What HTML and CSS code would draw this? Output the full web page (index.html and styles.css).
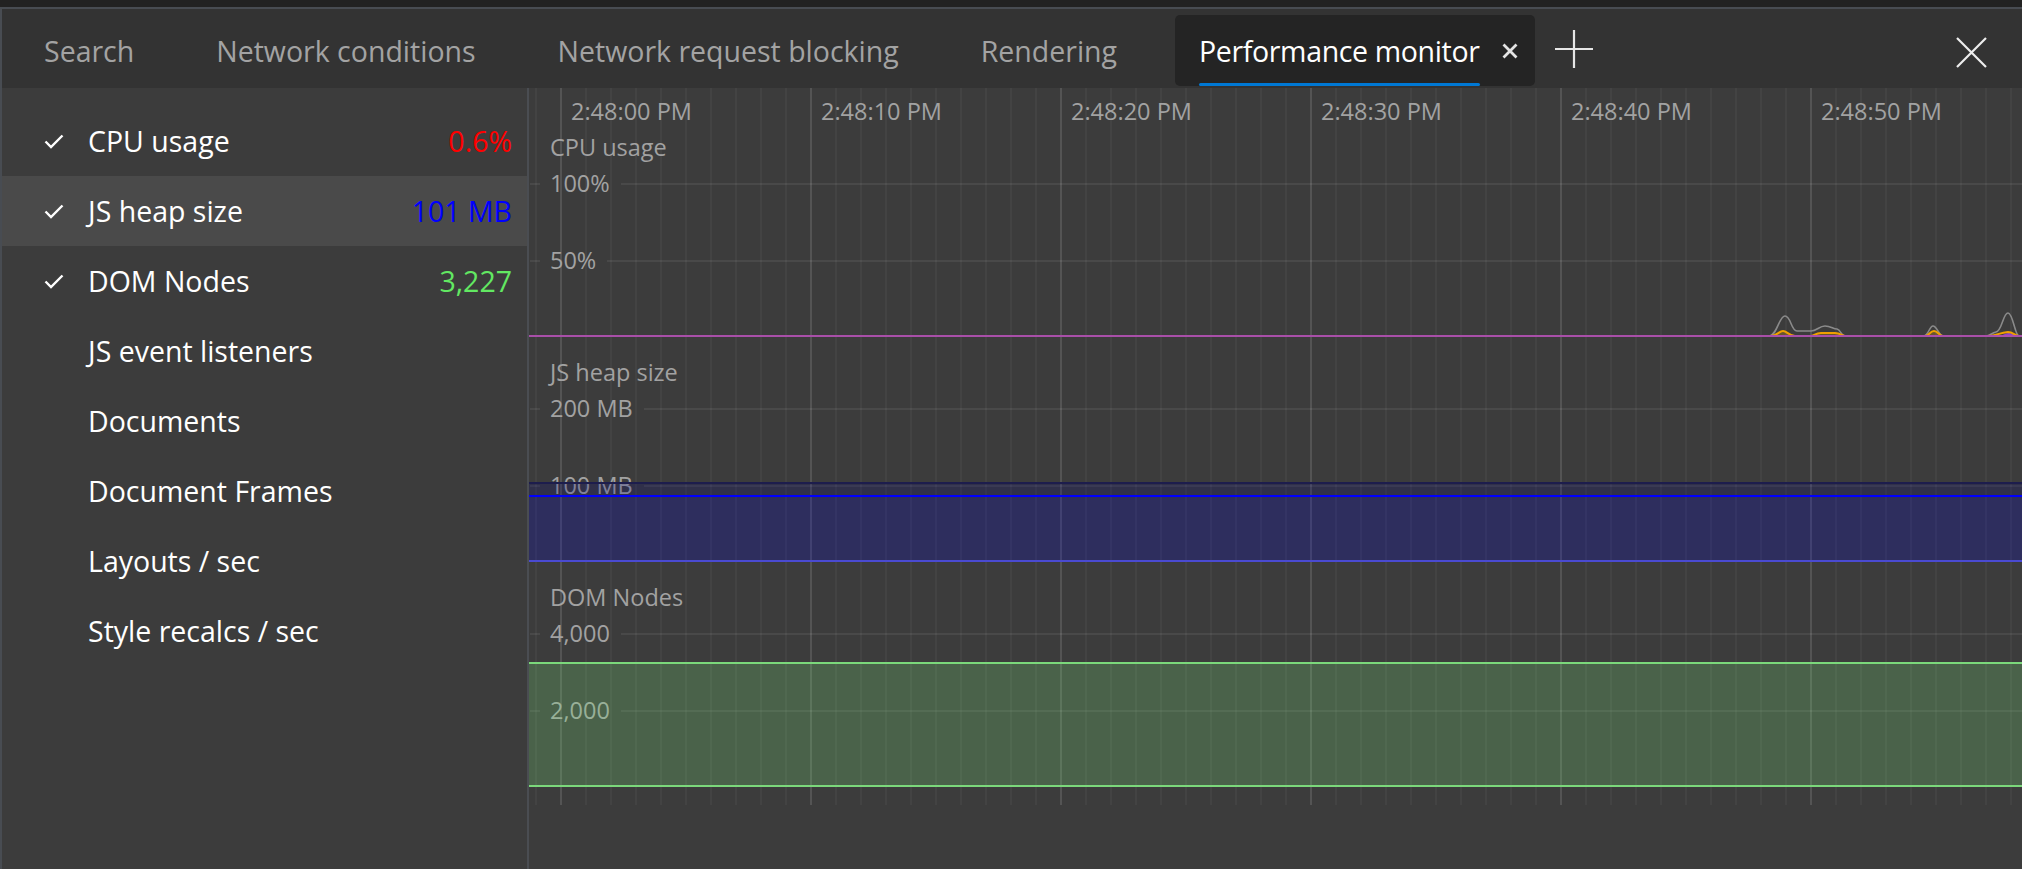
FILE: index.html
```html
<!DOCTYPE html>
<html lang="en">
<head>
<meta charset="utf-8">
<title>Performance monitor</title>
<link rel="stylesheet" href="styles.css">
</head>
<body>
<div class="topstrip"></div>
<div class="frame">
  <div class="tabbar">
    <div class="tab"><span class="tab-label">Search</span></div>
    <div class="tab"><span class="tab-label">Network conditions</span></div>
    <div class="tab"><span class="tab-label">Network request blocking</span></div>
    <div class="tab"><span class="tab-label">Rendering</span></div>
    <div class="tab active">
      <div class="tab-main">
        <span class="tab-label">Performance monitor</span>
        <span class="underline"></span>
      </div>
      <svg class="tab-close" viewBox="0 0 16 16"><path d="M1.5 1.5 L14.5 14.5 M14.5 1.5 L1.5 14.5" stroke="#e4e4e4" stroke-width="2.8" fill="none"/></svg>
    </div>
    <button class="add" aria-label="More tools"><svg viewBox="0 0 38 38"><path d="M19 0 V38 M0 19 H38" stroke="#e6e6e6" stroke-width="2.2" fill="none"/></svg></button>
    <div class="spacer"></div>
    <button class="close" aria-label="Close drawer"><svg viewBox="0 0 31 31"><path d="M1 1 L30 30 M30 1 L1 30" stroke="#eeeeee" stroke-width="2.2" fill="none"/></svg></button>
  </div>
  <div class="content">
    <div class="sidebar">
      <div class="row">
        <span class="check"><svg viewBox="0 0 20 16"><path d="M1.5 8.5 L7 14 L18.5 2.5" stroke="#fff" stroke-width="2.4" fill="none"/></svg></span>
        <span class="name">CPU usage</span><span class="value cpu">0.6%</span>
      </div>
      <div class="row selected">
        <span class="check"><svg viewBox="0 0 20 16"><path d="M1.5 8.5 L7 14 L18.5 2.5" stroke="#fff" stroke-width="2.4" fill="none"/></svg></span>
        <span class="name">JS heap size</span><span class="value heap">101 MB</span>
      </div>
      <div class="row">
        <span class="check"><svg viewBox="0 0 20 16"><path d="M1.5 8.5 L7 14 L18.5 2.5" stroke="#fff" stroke-width="2.4" fill="none"/></svg></span>
        <span class="name">DOM Nodes</span><span class="value dom">3,227</span>
      </div>
      <div class="row"><span class="check"></span><span class="name">JS event listeners</span></div>
      <div class="row"><span class="check"></span><span class="name">Documents</span></div>
      <div class="row"><span class="check"></span><span class="name">Document Frames</span></div>
      <div class="row"><span class="check"></span><span class="name">Layouts / sec</span></div>
      <div class="row"><span class="check"></span><span class="name">Style recalcs / sec</span></div>
    </div>
    <div class="panel">
      <div class="timeaxis">
        <span class="time">2:48:00 PM</span>
        <span class="time">2:48:10 PM</span>
        <span class="time">2:48:20 PM</span>
        <span class="time">2:48:30 PM</span>
        <span class="time">2:48:40 PM</span>
        <span class="time">2:48:50 PM</span>
      </div>

      <div class="chart">
        <div class="chart-title">CPU usage</div>
        <div class="plot">
          <div class="gline"><i class="tick"></i><span class="glabel">100%</span><i class="rule"></i></div>
          <div class="gline"><i class="tick"></i><span class="glabel">50%</span><i class="rule"></i></div>
          <svg class="series" viewBox="0 0 1493 195" width="1493" height="195">
            <path d="M1468 174 C1474 174 1476 171 1480 171 C1484 171 1486 174 1490 174 Z" fill="#8a3fd2"/>
            <path d="M1242 174 C1248 174 1250 169 1254 169 C1258 169 1260 174 1266 174 Z M1282 174 C1286 174 1286 171 1292 171 L1306 171 C1312 171 1312 174 1316 174 Z M1396 174 C1400 174 1401 169 1405 169 C1409 169 1410 174 1414 174 Z" fill="rgba(240,160,0,0.25)"/>
            <g fill="none" stroke="#8a8a8a" stroke-width="1.6">
              <path d="M1240 174 C1248 174 1250 154 1256 154 C1262 154 1262 169 1268 169 L1282 169 C1288 169 1290 164 1296 164 C1302 164 1304 167 1308 167 C1312 168 1312 174 1316 174"/>
              <path d="M1394 174 C1400 174 1400 164 1404 164 C1408 164 1410 174 1414 174"/>
              <path d="M1456 174 C1462 174 1462 171 1467 170 C1473 169 1474 151 1479 151 C1484 151 1486 174 1490 174"/>
            </g>
            <g fill="none" stroke="#f0a000" stroke-width="2">
              <path d="M1242 174 C1248 174 1250 169 1254 169 C1258 169 1260 174 1266 174"/>
              <path d="M1282 174 C1286 174 1286 171 1292 171 L1306 171 C1312 171 1312 174 1316 174"/>
              <path d="M1396 174 C1400 174 1401 169 1405 169 C1409 169 1410 174 1414 174"/>
              <path d="M1458 174 C1466 174 1470 171 1479 170 C1484 170 1486 174 1490 174"/>
            </g>
            <line x1="0" y1="174" x2="1493" y2="174" stroke="#a94fa9" stroke-width="2"/>
          </svg>
        </div>
      </div>

      <div class="chart">
        <div class="chart-title">JS heap size</div>
        <div class="plot">
          <div class="gline"><i class="tick"></i><span class="glabel">200 MB</span><i class="rule"></i></div>
          <div class="gline"><i class="tick"></i><span class="glabel">100 MB</span><i class="rule"></i></div>
          <svg class="series" viewBox="0 0 1493 195" width="1493" height="195">
            <rect x="0" y="96" width="1493" height="13" fill="rgba(0,0,128,0.2)"/>
            <rect x="0" y="109" width="1493" height="65" fill="rgba(0,0,220,0.22)"/>
            <line x1="0" y1="96" x2="1493" y2="96" stroke="#1d1d4d" stroke-width="2"/>
            <line x1="0" y1="109" x2="1493" y2="109" stroke="#0000ff" stroke-width="2"/>
            <line x1="0" y1="174" x2="1493" y2="174" stroke="#4a4ad2" stroke-width="2"/>
          </svg>
        </div>
      </div>

      <div class="chart">
        <div class="chart-title">DOM Nodes</div>
        <div class="plot">
          <div class="gline"><i class="tick"></i><span class="glabel">4,000</span><i class="rule"></i></div>
          <div class="gline"><i class="tick"></i><span class="glabel">2,000</span><i class="rule"></i></div>
          <svg class="series" viewBox="0 0 1493 195" width="1493" height="195">
            <rect x="0" y="51" width="1493" height="123" fill="rgba(120,220,120,0.24)"/>
            <line x1="0" y1="51" x2="1493" y2="51" stroke="#7bd87b" stroke-width="2"/>
            <line x1="0" y1="174" x2="1493" y2="174" stroke="#7bd87b" stroke-width="2"/>
          </svg>
        </div>
      </div>
    </div>
  </div>
</div>
</body>
</html>
```
FILE: styles.css
```css
html, body {
  margin: 0;
  padding: 0;
}
body {
  width: 2022px;
  height: 869px;
  overflow: hidden;
  background: #3b3b3b;
  font-family: "Open Sans", "Noto Sans", "Liberation Sans", sans-serif;
}
.topstrip {
  height: 7px;
  background: #222222;
  border-bottom: 2px solid #484c52;
}
.frame {
  height: 860px;
  border-left: 2px solid #484c52;
  display: flex;
  flex-direction: column;
}

/* ---------- tab bar ---------- */
.tabbar {
  height: 79px;
  flex: none;
  box-sizing: border-box;
  background: #333333;
  display: flex;
  align-items: flex-start;
  padding: 6px 35px 0 18px;
}
.tab {
  box-sizing: border-box;
  height: 71px;
  padding: 16px 24px 0;
  margin-right: 34px;
  font-size: 28.5px;
  line-height: 40px;
  color: #a3a3a3;
  white-space: nowrap;
  border-radius: 5px;
}
.tab.active {
  display: flex;
  align-items: flex-start;
  background: #242424;
  color: #ffffff;
  padding-right: 17px;
  margin-right: 20px;
}
.tab.active .tab-label {
  letter-spacing: -0.35px;
}
.tab-main {
  display: flex;
  flex-direction: column;
}
.underline {
  height: 3px;
  margin-top: 12px;
  background: #0078d4;
  border-radius: 2px;
}
.tab-close {
  width: 16px;
  height: 16px;
  margin: 12px 0 0 22px;
  flex: none;
}
.add, .close {
  border: 0;
  padding: 0;
  background: none;
  display: block;
}
.add {
  margin-top: 15px;
}
.add svg {
  display: block;
  width: 38px;
  height: 38px;
}
.spacer {
  flex: 1;
}
.close {
  margin-top: 22px;
}
.close svg {
  display: block;
  width: 31px;
  height: 31px;
}

/* ---------- content ---------- */
.content {
  flex: 1;
  display: flex;
  min-height: 0;
}
.sidebar {
  width: 525px;
  flex: none;
  background: #3c3c3c;
  border-right: 2px solid #4a4d52;
  padding-top: 18px;
}
.row {
  height: 70px;
  display: flex;
  align-items: center;
  padding: 0 15px 0 42px;
  color: #ffffff;
  font-size: 28.5px;
  white-space: nowrap;
}
.row.selected {
  background: #4a4a4a;
}
.check {
  width: 44px;
  flex: none;
  display: flex;
  align-items: center;
}
.check svg {
  width: 20px;
  height: 16px;
  display: block;
}
.name {
  flex: 1;
}
.value.cpu { color: #ff0000; }
.value.heap { color: #0000ff; }
.value.dom { color: #62e862; }

/* ---------- chart panel ---------- */
.panel {
  flex: 1;
  min-width: 0;
  overflow: hidden;
  background-color: #3c3c3c;
  background-image:
    linear-gradient(90deg, rgba(255,255,255,0.09) 0 2px, transparent 2px),
    linear-gradient(90deg, rgba(255,255,255,0.035) 0 2px, transparent 2px);
  background-size: 250px 717px, 25px 717px;
  background-position: 31px 0, 6px 0;
  background-repeat: repeat-x;
}
.timeaxis {
  height: 44px;
  box-sizing: border-box;
  padding: 1px 0 0 42px;
  display: flex;
  white-space: nowrap;
}
.time {
  width: 250px;
  flex: none;
  font-size: 23.5px;
  line-height: 44px;
  color: #a2a2a2;
}
.chart {
  height: 225px;
}
.chart-title {
  height: 30px;
  line-height: 30px;
  padding-left: 21px;
  font-size: 23.5px;
  color: #a2a2a2;
}
.plot {
  position: relative;
  height: 195px;
  box-sizing: border-box;
  padding-top: 7px;
  display: flex;
  flex-direction: column;
  gap: 47px;
}
.gline {
  height: 30px;
  display: flex;
  align-items: center;
}
.tick {
  width: 10px;
  height: 2px;
  margin-left: 1px;
  background: rgba(255,255,255,0.07);
}
.glabel {
  margin: 0 11px 3px 10px;
  font-size: 23.5px;
  line-height: 30px;
  color: #a2a2a2;
  white-space: nowrap;
}
.rule {
  flex: 1;
  height: 2px;
  background: rgba(255,255,255,0.07);
}
.series {
  position: absolute;
  left: 0;
  top: 0;
  display: block;
  pointer-events: none;
}
```
